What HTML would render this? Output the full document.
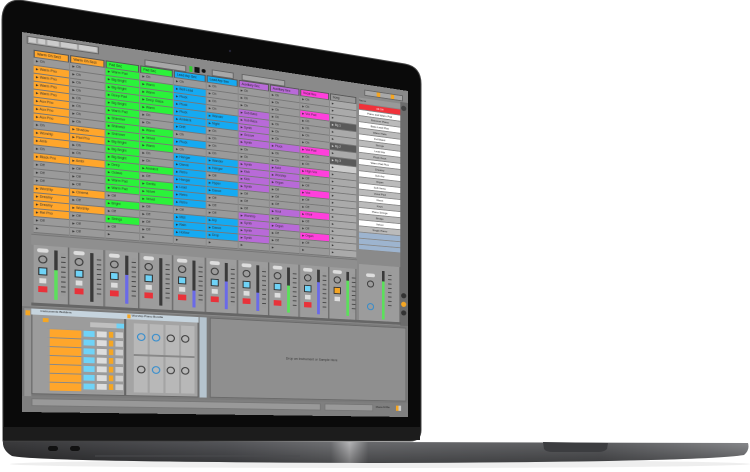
<!DOCTYPE html>
<html><head><meta charset="utf-8"><style>
*{margin:0;padding:0;box-sizing:border-box}
html,body{width:750px;height:472px;overflow:hidden;background:#fff;font-family:"Liberation Sans",sans-serif}
#scr{position:absolute;left:0;top:0;width:386px;height:380px;background:#8a8a8a;transform-origin:0 0;
transform:matrix3d(1.1751,0.19189,0,0.00042915,0,1,0,0,0,0,1,0,22,32,0,1);overflow:hidden;font-size:3.2px;color:#222}
.ab{position:absolute}
.col{position:absolute;top:16px;width:31px}
.col b{display:block;height:8px;border-bottom:1px solid #6e6e6e;font-weight:normal;line-height:7px;padding-left:2px;white-space:nowrap;overflow:hidden}
.hd{height:8px!important;border:1px solid #555}
.col i{display:block;height:8px;border-bottom:1px solid #777;background:#9a9a9a;font-style:normal;line-height:7px;padding-left:2px;white-space:nowrap;overflow:hidden;color:#333}
.col i:before{content:"▶ "}
.or b,.or .o{background:#ffa62b}
.gr b,.gr .o{background:#2bf23a}
.bl b,.bl .o{background:#15aaf2}
.pu b,.pu .o{background:#b86ad8}
.mg b,.mg .o{background:#ff3fdc}
.ms b{background:#999}
.ms i{background:#aaa}.ms .d{background:#5a5a5a;color:#ddd}
.mx{position:absolute;top:212px;width:31px;height:58px;background:#9c9c9c;border-right:1px solid #6a6a6a}
.mx .lb{position:absolute;left:3px;top:3px;width:10px;height:4px;background:#ddd;border-radius:2px}
.mx .kn{position:absolute;left:4px;top:10px;width:8px;height:8px;border:1.5px solid #333;border-radius:50%}
.mx .nb{position:absolute;left:4px;top:22px;width:8px;height:8px;background:#6fd3f7;border:1px solid #333}
.mx .wb{position:absolute;left:5px;top:33px;width:6px;height:5px;background:#ddd}
.mx .rb{position:absolute;left:4px;top:41px;width:8px;height:6px;background:#e8323a}
.mx .mt{position:absolute;left:18px;top:4px;width:3px;height:50px;background:#3a3a3a}
.mx .mt u{position:absolute;left:0;bottom:0;width:3px;height:30px}
.mx .sc{position:absolute;left:24px;top:6px;width:4px;height:44px;background:repeating-linear-gradient(#9a9a9a 0 4px,#444 4px 5px)}
.br{position:absolute;left:330px;top:16px;width:47px}
.br div{height:7px;border-bottom:1px solid #888;font-size:3px;line-height:6px;text-align:center;white-space:nowrap;overflow:hidden}
.br .w{background:#fff}.br .g{background:#bbb}.br .bu{background:#9db4cf}
</style></head><body>
<svg width="750" height="472" style="position:absolute;left:0;top:0">
<defs>
<linearGradient id="base" x1="0" y1="0" x2="1" y2="0">
<stop offset="0" stop-color="#3a3a3c"/><stop offset="0.3" stop-color="#55565a"/><stop offset="0.44" stop-color="#707174"/><stop offset="0.465" stop-color="#b8b8ba"/><stop offset="0.49" stop-color="#6a6b6e"/><stop offset="0.8" stop-color="#5e5f62"/><stop offset="1" stop-color="#8a8b8e"/></linearGradient>
<linearGradient id="bv" x1="0" y1="0" x2="0" y2="1"><stop offset="0" stop-color="#000" stop-opacity="0"/><stop offset="1" stop-color="#000" stop-opacity="0.35"/></linearGradient>
</defs>
<ellipse cx="380" cy="464" rx="370" ry="4" fill="#ddd" opacity="0.5"/>
<path d="M3 441 L748 443 Q750 450 744 455 Q700 462 380 463 Q40 462 12 456 Q2 450 3 441Z" fill="url(#base)"/>
<path d="M3 441 L748 443 Q750 450 744 455 Q700 462 380 463 Q40 462 12 456 Q2 450 3 441Z" fill="url(#bv)"/>
<path d="M543 442 L608 443 L607 449 Q604 452 598 452 L553 452 Q546 452 544 449Z" fill="#3c3d40"/>
<rect x="48" y="446" width="10" height="5" rx="2.5" fill="#111"/>
<rect x="70" y="446" width="10" height="5" rx="2.5" fill="#111"/>
<line x1="95" y1="456" x2="300" y2="456" stroke="#4a4b4e" stroke-width="1"/>
<path d="M2 20 Q2 0 20 0 L405 64 Q421 67 421 84 L421 430 Q421 441 410 441 L3 441 Z" fill="#0a0a0a" stroke="#444" stroke-width="1"/>
<rect x="3" y="427" width="417" height="13" fill="#1c1c1c"/>
<circle cx="230" cy="51" r="1.2" fill="#223"/>
</svg>
<div id="scr">
 <div class="ab" style="left:4px;top:3px;width:64px;height:8px;background:#a8a8a8;border:1px solid #666"></div>
 <div class="ab" style="left:6px;top:4px;width:6px;height:5px;background:#ccc"></div>
 <div class="ab" style="left:14px;top:4px;width:6px;height:5px;background:#ccc"></div>
 <div class="ab" style="left:22px;top:4px;width:10px;height:5px;background:#ccc"></div>
 <div class="ab" style="left:34px;top:4px;width:14px;height:5px;background:#ccc"></div>
 <div class="ab" style="left:50px;top:4px;width:16px;height:5px;background:#ccc"></div>
 <div class="ab" style="left:110px;top:9px;width:40px;height:7px;background:#a8a8a8;border:1px solid #666"></div>
 <div class="ab" style="left:153px;top:9px;width:3px;height:6px;background:#2ecf2e"></div>
 <div class="ab" style="left:158px;top:9px;width:5px;height:6px;background:#111"></div>
 <div class="ab" style="left:165px;top:10px;width:4px;height:4px;background:#111;border-radius:50%"></div>
 <div class="ab" style="left:175px;top:9px;width:22px;height:7px;background:#a8a8a8;border:1px solid #666"></div>
 <div class="ab" style="left:205px;top:9px;width:45px;height:7px;background:#a8a8a8;border:1px solid #666"></div>
 <div class="ab" style="left:336px;top:6px;width:44px;height:7px;background:#a8a8a8;border:1px solid #666"></div>
 <div class="ab" style="left:350px;top:7px;width:4px;height:5px;background:#f5a623"></div>
 <div class="ab" style="left:366px;top:7px;width:4px;height:5px;background:#f5a623"></div>

 <div class="col or" style="left:10px"><b class="hd">Warm Oh Sect</b><i>Oh</i><i class=o>Warm Pno</i><i class=o>Warm Pno</i><i class=o>Warm Pno</i><i class=o>Warm Pno</i><i class=o>Aux Pno</i><i class=o>Aux Pno</i><i class=o>Aux Pno</i><i>Oh</i><i class=o>Worship</i><i class=o>Amb</i><i>Oh</i><i class=o>Black Pno</i><i>Off</i><i>Off</i><i>Off</i><i class=o>Worship</i><i class=o>Dreamy</i><i class=o>Dreamy</i><i class=o>Rel Pno</i><i>Off</i><i></i></div>
 <div class="col or" style="left:42px"><b class="hd">Warm Oh Sect</b><i>Oh</i><i>Oh</i><i>Oh</i><i>Oh</i><i>Oh</i><i>Oh</i><i>Oh</i><i>Oh</i><i class=o>Shadow</i><i class=o>Pad Pno</i><i>Oh</i><i>Oh</i><i class=o>Ambi</i><i>Off</i><i>Off</i><i>Off</i><i class=o>Cinema</i><i>Off</i><i class=o>Worship</i><i>Off</i><i>Off</i><i>Off</i></div>
 <div class="col gr" style="left:74px"><b class="hd">Pad Sec</b><i class=o>Warm Pad</i><i class=o>Big Bright</i><i class=o>Big Bright</i><i class=o>Deep Pad</i><i class=o>Big Bright</i><i class=o>Warm Pad</i><i class=o>Shimmer</i><i class=o>Shimmer</i><i class=o>Shimmer</i><i class=o>Big Bright</i><i class=o>Big Bright</i><i class=o>Big Bright</i><i class=o>Deep</i><i class=o>Octave</i><i class=o>Warm Pad</i><i class=o>Warm Pad</i><i>Off</i><i class=o>Bright</i><i>Off</i><i class=o>Strings</i><i>Off</i><i></i></div>
 <div class="col gr" style="left:106px"><b class="hd">Pad Sec</b><i>Oh</i><i class=o>Warm</i><i class=o>Warm</i><i class=o>Deep Glass</i><i class=o>Warm</i><i>Oh</i><i>Oh</i><i class=o>Warm</i><i class=o>Velvet</i><i class=o>Warm</i><i>Oh</i><i>Oh</i><i class=o>Ambient</i><i>Off</i><i class=o>Gentle</i><i class=o>Velvet</i><i class=o>Velvet</i><i>Off</i><i>Off</i><i>Off</i><i>Off</i><i></i></div>
 <div class="col bl" style="left:138px"><b class="hd">Lead Arp Sec</b><i>Oh</i><i class=o>Bell Lead</i><i class=o>Pluck</i><i class=o>Pluck</i><i class=o>Pluck</i><i class=o>Ambient</i><i class=o>Drift</i><i>Oh</i><i class=o>Pluck</i><i>Oh</i><i class=o>Hangar</i><i class=o>Dance</i><i class=o>Retro</i><i class=o>Hangar</i><i class=o>Lead</i><i class=o>Retro</i><i class=o>Retro</i><i>Off</i><i class=o>Mist</i><i class=o>Rain</i><i class=o>Hollow</i><i></i></div>
 <div class="col bl" style="left:170px"><b class="hd">Lead Arp Sec</b><i>Oh</i><i>Oh</i><i>Oh</i><i>Oh</i><i class=o>Wander</i><i class=o>Night</i><i>Oh</i><i>Oh</i><i>Oh</i><i>Oh</i><i class=o>Wander</i><i class=o>Hangar</i><i>Off</i><i class=o>Hyper</i><i class=o>Dance</i><i>Off</i><i>Off</i><i>Off</i><i class=o>Arp</i><i class=o>Dance</i><i class=o>Drop</i><i></i></div>
 <div class="col pu" style="left:202px"><b class="hd">Auxiliary Sec</b><i>Oh</i><i>Oh</i><i>Oh</i><i class=o>Sub Bass</i><i class=o>Sub Bass</i><i class=o>Synth</i><i class=o>Groove</i><i class=o>Synth</i><i>Oh</i><i>Oh</i><i class=o>Synth</i><i class=o>Kick</i><i class=o>Kick</i><i class=o>Synth</i><i>Off</i><i>Off</i><i>Off</i><i class=o>Worship</i><i class=o>Synth</i><i class=o>Synth</i><i class=o>Synth</i><i></i></div>
 <div class="col pu" style="left:234px"><b class="hd">Auxiliary Sec</b><i>Oh</i><i>Oh</i><i>Oh</i><i>Oh</i><i>Oh</i><i>Oh</i><i>Oh</i><i class=o>Pluck</i><i>Oh</i><i>Oh</i><i class=o>Acid</i><i class=o>Worship</i><i class=o>Organ</i><i>Off</i><i>Off</i><i>Off</i><i class=o>Soul</i><i>Off</i><i class=o>Organ</i><i>Off</i><i>Off</i><i></i></div>
 <div class="col mg" style="left:266px"><b class="hd">Vocal Sec</b><i>Oh</i><i>Oh</i><i class=o>Vox Pad</i><i>Oh</i><i>Oh</i><i>Oh</i><i>Oh</i><i class=o>Vox Pad</i><i>Oh</i><i>Oh</i><i class=o>High Vox</i><i>Off</i><i>Off</i><i class=o>Vox</i><i>Off</i><i>Off</i><i class=o>Choir</i><i>Off</i><i>Off</i><i class=o>Organ</i><i>Off</i><i></i></div>
 <div class="col ms" style="left:298px;width:29px"><b class="hd">Song</b><i></i><i></i><i></i><i class=d>Bg 1</i><i></i><i></i><i class=d>Bg 2</i><i></i><i class=d>Bg 3</i><i style="background:#ccc"></i><i></i><i></i><i></i><i></i><i></i><i></i><i></i><i></i><i></i><i></i><i></i><i></i></div>
 <div class="ab" style="left:8px;top:201px;width:320px;height:11px;background:#8f8f8f;border-top:1px solid #777"></div>

 <div class="br"><div class="g" style="background:#999;text-align:left">Name</div><div style="background:#f0323a;color:#fff">All Off</div><div class="w">Piano and Warm Pad</div><div class="g">Shimmer Piano</div><div class="w">Bass Lead Plus</div><div class="g">Warm Pads</div><div class="w">Full Band</div><div class="g">Strings</div><div class="w">Lead Arp</div><div class="g">Pluck Keys</div><div class="w">Warm Pad Plus</div><div class="g">Dreamy</div><div class="w">Sub Arp</div><div class="g">Organ</div><div class="w">Soft Verse</div><div class="g">Vocal Pad</div><div class="w">Glass</div><div class="g">Keys</div><div class="w">Piano Strings</div><div class="g">Bridge</div><div class="w">Velvet</div><div class="g">Single Piano</div><div class="bu"></div><div class="bu"></div><div class="bu" style="height:6px"></div></div>
 <div class="ab" style="left:377px;top:14px;width:9px;height:262px;background:#6c6c6c"></div>
 <div class="ab" style="left:378px;top:18px;width:6px;height:6px;border-radius:50%;background:#444"></div>
 <div class="ab" style="left:378px;top:236px;width:6px;height:6px;border-radius:50%;background:#333"></div>
 <div class="ab" style="left:378px;top:246px;width:6px;height:6px;border-radius:50%;background:#f5a623"></div>
 <div class="ab" style="left:378px;top:256px;width:6px;height:6px;border-radius:50%;background:#333"></div>

 <div class="mx" style="left:10px"><div class=lb></div><div class=kn></div><div class=nb></div><div class=wb></div><div class=rb></div><div class=mt><u style="background:#5be05b"></u></div><div class=sc></div></div>
 <div class="mx" style="left:42px"><div class=lb></div><div class=kn></div><div class=nb></div><div class=wb></div><div class=rb></div><div class=mt></div><div class=sc></div></div>
 <div class="mx" style="left:74px"><div class=lb></div><div class=kn></div><div class=nb></div><div class=wb></div><div class=rb></div><div class=mt><u style="background:#6a6ae8"></u></div><div class=sc></div></div>
 <div class="mx" style="left:106px"><div class=lb></div><div class=kn></div><div class=nb></div><div class=wb></div><div class=rb></div><div class=mt></div><div class=sc></div></div>
 <div class="mx" style="left:138px"><div class=lb></div><div class=kn></div><div class=nb></div><div class=wb></div><div class=rb></div><div class=mt><u style="background:#6a6ae8;height:18px"></u></div><div class=sc></div></div>
 <div class="mx" style="left:170px"><div class=lb></div><div class=kn></div><div class=nb></div><div class=wb></div><div class=rb></div><div class=mt><u style="background:#6a6ae8"></u></div><div class=sc></div></div>
 <div class="mx" style="left:202px"><div class=lb></div><div class=kn></div><div class=nb></div><div class=wb></div><div class=rb></div><div class=mt><u style="background:#6a6ae8;height:20px"></u></div><div class=sc></div></div>
 <div class="mx" style="left:234px"><div class=lb></div><div class=kn></div><div class=nb></div><div class=wb></div><div class=rb></div><div class=mt><u style="background:#5be05b"></u></div><div class=sc></div></div>
 <div class="mx" style="left:266px"><div class=lb></div><div class=kn></div><div class=nb></div><div class=wb></div><div class=rb></div><div class=mt><u style="background:#6a6ae8;height:36px"></u></div><div class=sc></div></div>
 <div class="mx" style="left:298px;width:29px"><div class=lb></div><div class=kn></div><div class=nb style="background:#f5a623"></div><div class=wb></div><div class=mt><u style="background:#5be05b;height:40px"></u></div><div class=sc></div></div>
 <div class="mx" style="left:330px;width:47px;top:206px;height:64px"><div class=lb style="left:8px;top:10px"></div><div class=kn style="left:9px;top:18px"></div><div class=kn style="left:9px;top:44px;border-color:#2a8ad0"></div><div class=mt style="left:26px;top:6px;height:56px"><u style="background:#5be05b;height:44px"></u></div><div class=sc style="left:33px"></div></div>
 <div class="ab" style="left:8px;top:270px;width:370px;height:3px;background:#666"></div>

 <div class="ab" style="left:0;top:274px;width:386px;height:106px;background:#7a7a7a"></div>
 <div class="ab" style="left:2px;top:276px;width:6px;height:88px;background:#959595"></div>
 <div class="ab" style="left:3px;top:278px;width:4px;height:5px;background:#f5a623"></div>
 <div class="ab" style="left:8px;top:276px;width:84px;height:86px;background:#9c9c9c;border:1px solid #666"></div>
 <div class="ab" style="left:8px;top:276px;width:84px;height:6px;background:#c6d4de;font-size:3px;padding-left:8px">Instruments Builders</div>
 <div class="ab" style="left:18px;top:285px;width:5px;height:4px;background:#f5a623"></div>
 <div class="ab" style="left:60px;top:287px;width:30px;height:5px;background:#c0c0c0"></div>
 <div class="ab" style="left:84px;top:287px;width:7px;height:5px;background:#6fd3f7"></div>
 <div class="ab" style="left:22px;top:295px;width:68px;height:64px;background:repeating-linear-gradient(#999 0 1px,transparent 1px 9px)"></div>
 <div class="ab" style="left:24px;top:296px;width:28px;height:62px;background:repeating-linear-gradient(#ffa62b 0 8px,#888 8px 9px)"></div>
 <div class="ab" style="left:54px;top:296px;width:10px;height:62px;background:repeating-linear-gradient(#6fd3f7 0 6px,transparent 6px 9px)"></div>
 <div class="ab" style="left:66px;top:296px;width:9px;height:62px;background:repeating-linear-gradient(#ddd 0 6px,transparent 6px 9px)"></div>
 <div class="ab" style="left:77px;top:296px;width:4px;height:62px;background:repeating-linear-gradient(#f5a623 0 6px,transparent 6px 9px)"></div>
 <div class="ab" style="left:83px;top:296px;width:7px;height:62px;background:repeating-linear-gradient(#ccc 0 6px,transparent 6px 9px)"></div>
 <div class="ab" style="left:92px;top:276px;width:70px;height:86px;background:#a4a4a4;border:1px solid #666"></div>
 <div class="ab" style="left:92px;top:276px;width:70px;height:6px;background:#c6d4de;font-size:3px;padding-left:6px">Worship Piano Bundle</div>
 <div class="ab" style="left:94px;top:277px;width:3px;height:4px;background:#f5a623"></div>
 <div class="ab" style="left:100px;top:286px;width:58px;height:72px;background:repeating-linear-gradient(90deg,#b8b8b8 0 13px,transparent 13px 15px)"></div>
 <div class="ab" style="left:103px;top:296px;width:8px;height:8px;border:1.5px solid #2a8ad0;border-radius:50%"></div>
 <div class="ab" style="left:117px;top:296px;width:8px;height:8px;border:1.5px solid #2a8ad0;border-radius:50%"></div>
 <div class="ab" style="left:131px;top:296px;width:8px;height:8px;border:1.5px solid #333;border-radius:50%"></div>
 <div class="ab" style="left:145px;top:296px;width:8px;height:8px;border:1.5px solid #333;border-radius:50%"></div>
 <div class="ab" style="left:103px;top:330px;width:8px;height:8px;border:1.5px solid #333;border-radius:50%"></div>
 <div class="ab" style="left:117px;top:330px;width:8px;height:8px;border:1.5px solid #2a8ad0;border-radius:50%"></div>
 <div class="ab" style="left:131px;top:330px;width:8px;height:8px;border:1.5px solid #333;border-radius:50%"></div>
 <div class="ab" style="left:145px;top:330px;width:8px;height:8px;border:1.5px solid #333;border-radius:50%"></div>
 <div class="ab" style="left:100px;top:318px;width:58px;height:2px;background:#888"></div>
 <div class="ab" style="left:163px;top:276px;width:7px;height:86px;background:#b5c4cf"></div>
 <div class="ab" style="left:173px;top:276px;width:211px;height:86px;background:#8f8f8f;border:1px solid #6a6a6a;font-size:3.5px;color:#333;text-align:center;line-height:80px">Drop an Instrument or Sample Here</div>
 <div class="ab" style="left:0;top:364px;width:386px;height:16px;background:#7f7f7f"></div>
 <div class="ab" style="left:8px;top:366px;width:280px;height:8px;background:#999;border:1px solid #777"></div>
 <div class="ab" style="left:292px;top:366px;width:54px;height:8px;background:#999;border:1px solid #777"></div>
 <div class="ab" style="left:349px;top:367px;width:22px;height:6px;font-size:3px">Piano M Ba</div>
 <div class="ab" style="left:372px;top:367px;width:6px;height:6px;background:linear-gradient(90deg,#f5a623 50%,#ccc 50%)"></div>
</div>
</body></html>
